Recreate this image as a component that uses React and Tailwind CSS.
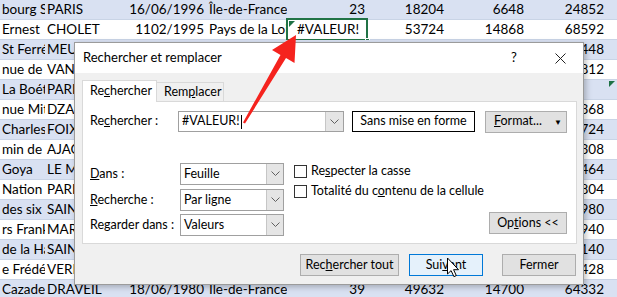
// Excel "Rechercher et remplacer" dialog over a table
const COLS = [45, 80, 82, 80, 81, 79, 80, 80, 30];
const RIGHT = [false, false, true, false, true, true, true, true, false];

// rows 2..13 : columns C-G are hidden by the dialog, left empty
const rows = [
  ['bourg Saint', 'PARIS', '16/06/1996', 'Île-de-France', '23', '18204', '6648', '24852', ''],
  ['Ernest', 'CHOLET', '1102/1995', 'Pays de la Loire', '#VALEUR!', '53724', '14868', '68592', ''],
  ['St Ferréol', 'MEUDON', '', '', '', '', '', '68448', ''],
  ['nue de Verdun', 'VANNES', '', '', '', '', '', '72812', ''],
  ['La Boétie', 'PARIS', '', '', '', '', '', '', ''],
  ['nue Mitterrand', 'DZAOUDZI', '', '', '', '', '', '54368', ''],
  ['Charles de', 'FOIX', '', '', '', '', '', '62724', ''],
  ['min de la', 'AJACCIO', '', '', '', '', '', '50308', ''],
  ['Goya', 'LE MANS', '', '', '', '', '', '58464', ''],
  ['Nation', 'PARIS', '', '', '', '', '', '66804', ''],
  ['des six Fr', 'SAINT-DENIS', '', '', '', '', '', '51980', ''],
  ['rs Franklin', 'MARSEILLE', '', '', '', '', '', '61940', ''],
  ['de la Ha', 'SAINT-MALO', '', '', '', '', '', '69140', ''],
  ['e Frédéric', 'VERNON', '', '', '', '', '', '58428', ''],
  ['Cazade', 'DRAVEIL', '18/06/1980', 'Île-de-France', '39', '49632', '14700', '64332', ''],
];

function Cell({ w, right, text, selected, triangle }) {
  return (
    <div
      className={`relative h-full shrink-0 overflow-hidden whitespace-nowrap flex items-center ${right ? 'justify-end pr-[3px]' : selected ? 'pl-[10px]' : 'pl-[2px]'}`}
      style={{ width: w }}
    >
      {text}
      {triangle && (
        <div className="absolute left-[2px] top-[1px] w-0 h-0 border-t-[6px] border-t-[#1e7145] border-r-[6px] border-r-transparent" />
      )}
    </div>
  );
}

function Sheet() {
  return (
    <div className="flex flex-col text-[13.5px] text-black" style={{ fontFamily: 'Lato, "Liberation Sans", sans-serif' }}>
      {rows.map((r, i) => (
        <div
          key={i}
          className={`relative flex h-[20px] shrink-0 ${i % 2 === 0 ? 'bg-[#d9e1f2]' : 'bg-white'} border-b border-[#c9d4e6]`}
        >
          {r.map((t, j) => (
            <Cell
              key={j}
              w={COLS[j]}
              right={RIGHT[j] && !(i === 1 && j === 4)}
              selected={i === 1 && j === 4}
              text={t}
              triangle={(i === 1 && j === 4) || (i === 4 && j === 8)}
            />
          ))}
          {i === 1 && (
            <div className="absolute left-[286px] top-[-2px] w-[82px] h-[23px] border-2 border-[#217346]">
              <div className="absolute right-[-4px] bottom-[-4px] w-[5px] h-[5px] bg-[#217346] border border-white" />
            </div>
          )}
        </div>
      ))}
    </div>
  );
}

function Chevron() {
  return (
    <svg width="9" height="6" viewBox="0 0 9 6">
      <path d="M0.5 0.5 L4.5 4.5 L8.5 0.5" fill="none" stroke="#606060" strokeWidth="1" />
    </svg>
  );
}

function Select({ value, w, h = 22, arrowW = 17, caret }) {
  return (
    <div className="flex bg-white border border-[#a0a0a0] shrink-0" style={{ width: w, height: h }}>
      <div className="flex-1 flex items-center pl-[3px] text-black">
        {value}
        {caret && <span className="inline-block w-px h-[14px] bg-black ml-[1px]" />}
      </div>
      <div className="flex items-center justify-center bg-[#e5e5e5] border-l border-[#c6c6c6]" style={{ width: arrowW }}>
        <Chevron />
      </div>
    </div>
  );
}

function Btn({ children, w, active }) {
  return (
    <div
      className={`flex items-center justify-center h-[22px] shrink-0 border ${active ? 'bg-[#e5f1fb] border-[#0078d7]' : 'bg-[#e1e1e1] border-[#adadad]'}`}
      style={{ width: w }}
    >
      {children}
    </div>
  );
}

function Check({ children }) {
  return (
    <div className="flex items-center gap-[4px] h-[13px]">
      <div className="w-[13px] h-[13px] border border-[#333] bg-white shrink-0" />
      <span>{children}</span>
    </div>
  );
}

function Dialog() {
  return (
    <div
      className="absolute left-[74px] top-[42px] w-[510px] h-[243px] flex flex-col border border-[#9b9b9b] shadow-[2px_2px_6px_rgba(0,0,0,0.25)] text-[12.5px] text-black"
      style={{ fontFamily: 'Lato, "Liberation Sans", sans-serif' }}
    >
      {/* barre de titre */}
      <div className="flex h-[30px] bg-white items-center shrink-0">
        <div className="pl-[8px] text-[13px]">Rechercher et remplacer</div>
        <div className="ml-auto flex h-full">
          <div className="w-[46px] flex items-center justify-center text-[13px]">?</div>
          <div className="w-[46px] flex items-center justify-center">
            <svg width="11" height="11" viewBox="0 0 11 11">
              <path d="M0.5 0.5 L10.5 10.5 M10.5 0.5 L0.5 10.5" stroke="#222" strokeWidth="1" />
            </svg>
          </div>
        </div>
      </div>

      <div className="flex-1 bg-[#f0f0f0] pt-[7px] pl-[7px]">
        {/* onglets */}
        <div className="flex items-end h-[21px]">
          <div className="relative z-10 h-[22px] mb-[-1px] w-[75px] bg-white border border-b-0 border-[#d9d9d9] flex items-center pl-[7px]">
            Re<span className="underline">c</span>hercher
          </div>
          <div className="h-[19px] w-[67px] bg-[#f0f0f0] border border-l-0 border-b-0 border-[#d9d9d9] flex items-center pl-[7px]">
            Rem<span className="underline">p</span>lacer
          </div>
        </div>

        {/* panneau */}
        <div className="w-[495px] h-[143px] bg-white border border-[#d9d9d9] pt-[9px] pl-[7px]">
          <div className="flex items-center h-[21px]">
            <div className="w-[88px] shrink-0">
              Re<span className="underline">c</span>hercher :
            </div>
            <Select value="#VALEUR!" w={166} h={21} arrowW={18} caret />
            <div className="ml-[8px] w-[123px] h-[21px] border border-black bg-white flex items-center justify-center">
              Sans mise en forme
            </div>
            <div className="ml-[10px]">
              <Btn w={82}>
                <span className="pl-[8px]"><span className="underline">F</span>ormat...</span>
                <span className="ml-auto pr-[4px] text-[8px]">▼</span>
              </Btn>
            </div>
          </div>

          <div className="flex mt-[31px]">
            <div className="flex flex-col">
              <div className="flex items-center">
                <div className="w-[90px]"><span className="underline">D</span>ans :</div>
                <Select value="Feuille" w={104} />
              </div>
              <div className="flex items-center mt-[4px]">
                <div className="w-[90px]"><span className="underline">R</span>echerche :</div>
                <Select value="Par ligne" w={104} />
              </div>
              <div className="flex items-center mt-[3px]">
                <div className="w-[90px]">Re<span className="underline">g</span>arder dans :</div>
                <Select value="Valeurs" w={104} />
              </div>
            </div>
            <div className="flex-1 flex flex-col ml-[10px] pr-[9px] pt-[2px]">
              <Check>
                Re<span className="underline">s</span>pecter la casse
              </Check>
              <div className="mt-[7px]">
                <Check>
                  Totalité du c<span className="underline">o</span>ntenu de la cellule
                </Check>
              </div>
              <div className="self-end mt-[14px]">
                <Btn w={78}>
                  Op<span className="underline">t</span>ions &lt;&lt;
                </Btn>
              </div>
            </div>
          </div>
        </div>

        {/* boutons */}
        <div className="flex justify-end pr-[7px] mt-[10px]">
          <Btn w={99}>
            Rec<span className="underline">h</span>ercher tout
          </Btn>
          <div className="ml-[10px]">
            <Btn w={74} active>
              Sui<span className="underline">v</span>ant
            </Btn>
          </div>
          <div className="ml-[19px]">
            <Btn w={74}>Fermer</Btn>
          </div>
        </div>
      </div>
    </div>
  );
}

function Overlay() {
  return (
    <svg className="absolute left-0 top-0 pointer-events-none" width="617" height="297" viewBox="0 0 617 297">
      <polygon
        points="296,35 294.5,63 286,58 245,123.5 243,122.5 280.5,55 272,50"
        fill="#f5231e"
      />
      {/* curseur souris */}
      <g transform="translate(447.5 258)">
        <path
          d="M0 0 L0 16 L3.6 12.6 L6.4 18.6 L8.8 17.6 L6.1 11.7 L11 11.7 Z"
          fill="white"
          stroke="black"
          strokeWidth="1"
          strokeLinejoin="round"
        />
      </g>
    </svg>
  );
}

export default function App() {
  return (
    <div className="relative w-[617px] h-[297px] overflow-hidden bg-white">
      <Sheet />
      <Dialog />
      <Overlay />
    </div>
  );
}
